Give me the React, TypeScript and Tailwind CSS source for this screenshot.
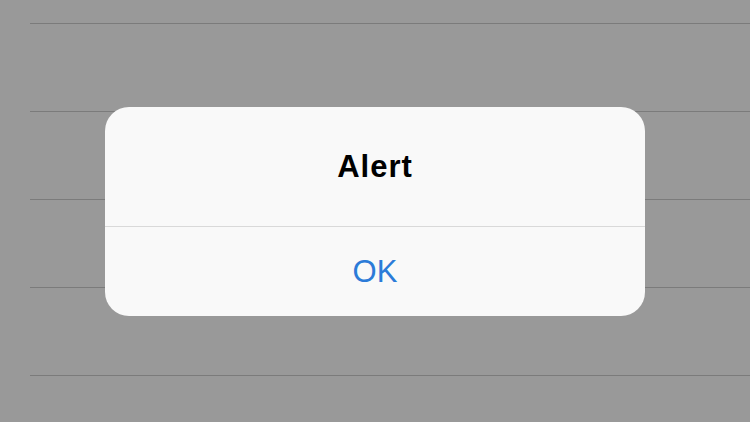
const rows = [0, 1, 2, 3, 4];

export default function App() {
  return (
    <div className="relative w-[750px] h-[422px] overflow-hidden bg-[#999999]" style={{ fontFamily: '"Liberation Sans", Arial, sans-serif' }}>
      {/* list behind the alert */}
      <div className="flex flex-col pt-[23px] pl-[30px] gap-[87px]">
        {rows.map((r) => (
          <div key={r} className="h-px bg-[#7b7b7b]" />
        ))}
      </div>

      {/* alert */}
      <div className="absolute left-[105px] top-[107px] w-[540px] rounded-[24px] bg-[#f9f9f9] overflow-hidden flex flex-col">
        <div className="h-[120px] flex items-center justify-center border-b border-[#d9d9d9]">
          <span className="text-[31px] font-bold text-black tracking-[1px] leading-none">Alert</span>
        </div>
        <div className="h-[89px] flex items-center justify-center">
          <span className="text-[31px] text-[#2b7bd8] leading-none">OK</span>
        </div>
      </div>
    </div>
  );
}
